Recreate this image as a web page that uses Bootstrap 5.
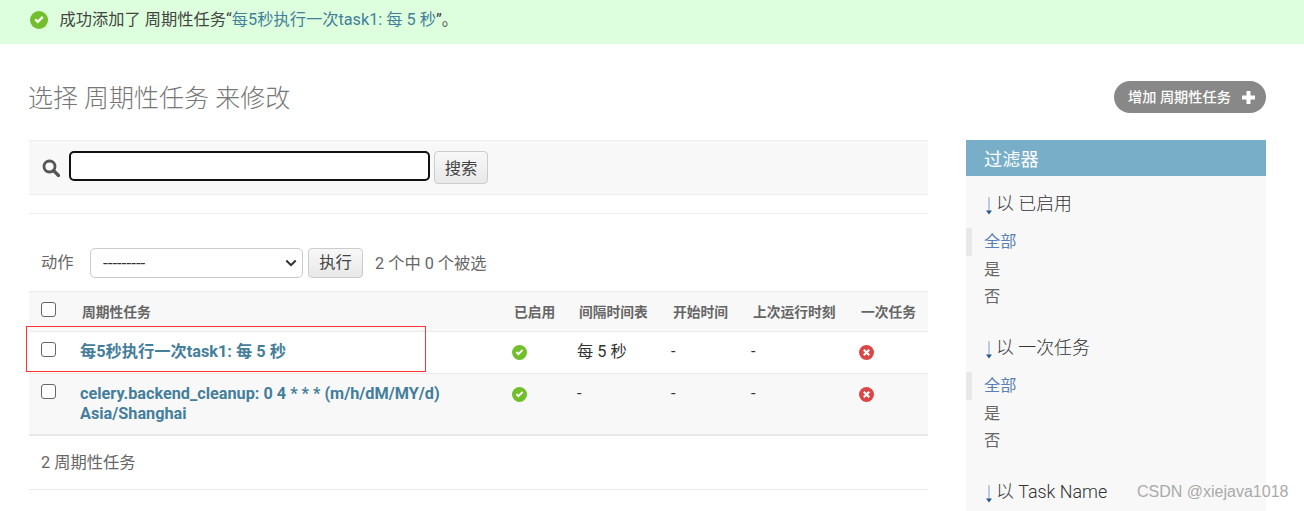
<!DOCTYPE html>
<html lang="zh-CN">
<head>
<meta charset="utf-8">
<title>选择 周期性任务 来修改</title>
<link rel="stylesheet" href="https://cdn.jsdelivr.net/npm/bootstrap@5.3.0/dist/css/bootstrap.min.css">
<style>
html,body{height:100%;overflow:hidden}
body{font-family:Roboto,"Noto Sans CJK SC",sans-serif;font-size:16.25px;line-height:20px;color:#333;background:#fff}
a{text-decoration:none;color:#447e9b}
.shell{position:relative;height:511px;overflow:hidden}
.msg-bar{height:44px;background:#dfd;color:#444;border:0;border-radius:0;margin:0;padding:0 0 4px 30px;gap:11.5px}
.msg-ico{width:18px;height:18px;flex:none}
.page-wrap{padding:37px 38px 0 29px}
.page-head{height:32px;margin-bottom:27px}
.page-title{font-size:25px;font-weight:300;line-height:32px;color:#777;margin:0;padding-top:3px;margin-left:-1px}
.add-btn{width:152px;height:32px;background:#888;color:#fff;font-size:14.2px;font-weight:500;line-height:32px;padding:0 0 0 14px;border:0;gap:11px}
.add-btn:hover{background:#888;color:#fff}
.main-col{width:899px;flex:none}
.side-col{width:300px;flex:none;background:#f8f8f8;height:371px}
.search-bar{height:55px;background:#f8f8f8;border-top:1px solid #eee;border-bottom:1px solid #eee;padding:10px 0 0 13px;gap:4px}
.search-ico{width:18px;height:18px;margin:8px 5px 0 0;flex:none}
.search-input{width:361px;height:30px;border:2px solid #111;border-radius:5px;background:#fff;padding:2px 6px}
.search-input:focus{border-color:#111;box-shadow:none}
.grey-btn{font-size:16.25px;line-height:20px;color:#444;border:1px solid #ccc;border-radius:4px;background:linear-gradient(#f8f8f8,#e8e8e8);padding:0}
.grey-btn:hover{color:#444;border-color:#ccc}
.go-search{width:54px;height:33px;padding-top:2px}
.rule-gap{height:19px;border-bottom:1px solid #eee}
.action-row{height:77px;padding:34px 0 0 12px}
.action-label{color:#666;width:49px;flex:none;margin-top:-1px}
.action-select{width:213px;height:30px;font-size:17px;line-height:20px;color:#333;border:1px solid #ccc;border-radius:5px;padding:0 0 0 12px;background-image:url("data:image/svg+xml,%3csvg xmlns='http://www.w3.org/2000/svg' viewBox='0 0 14 9'%3e%3cpath fill='none' stroke='%23333' stroke-width='2.4' d='M1.5 1.5L7 7l5.500-5.500'/%3e%3c/svg%3e");background-position:right 5px center;background-size:12px 8px;margin-right:5px}
.go-action{width:55px;height:30px;margin-right:12px}
.counter{color:#666}
.task-table{table-layout:fixed;width:899px;margin:0;color:#333;border-top:1px solid #eaeaea}
.table.task-table>*>*>*{box-shadow:none;background:transparent;border-bottom:1px solid #eaeaea;padding:10px 0 10px 10px;vertical-align:top;color:#333;font-size:16.25px;line-height:20px}
.table.task-table>thead>tr>th{background:#f8f8f8;font-size:13.75px;font-weight:600;color:#666;height:40px;padding:10px 0 9px 12px}
.table.task-table>tbody>tr:first-child>td{height:42px}
.table.task-table>tbody>tr:nth-child(2)>td{background:#f8f8f8;border-bottom:2px solid #e8e8e8}
.c-a{width:41px}.c-b{width:432px}.c-c{width:65px}.c-d{width:94px}.c-e{width:80px}.c-f{width:108px}.c-g{width:79px}
.table.task-table>*>*>.cell-check{padding:10px 0 0 12px}
.task-table .form-check-input{width:15px;height:15px;margin:0;border:1px solid #666;border-radius:3px;display:block}
.task-table a{font-weight:700}
.st-ico{width:15px;height:15px;display:block;margin-top:3px}
.paginator{height:54px;border-bottom:1px solid #eaeaea;padding:17px 0 0 12px;color:#666}
.side-title{height:36px;background:#79aec8;color:#fff;font-size:18.2px;line-height:39px;font-weight:400;margin:0;padding-left:18px;overflow:hidden}
.f-group{padding:17px 0 21px;height:144px}
.f-head{font-size:17.9px;font-weight:300;line-height:22px;margin:0 0 13px;padding-left:19px;color:#333;gap:3px}
.f-arrow{width:8px;height:18px;margin-top:4px;flex:none}
.f-list{margin:0;padding:0;list-style:none}
.f-list li{height:27.5px;line-height:27px;padding-left:12px;border-left:6px solid transparent}
.f-list a{color:#666}
.f-list li.is-on{border-left-color:#e8e8e8}
.f-list li.is-on a{color:#5b80b2}
.red-mark{position:absolute;left:26px;top:326px;width:400px;height:46px;border:1px solid #f33;pointer-events:none}
.wm{position:absolute;left:1137px;top:482px;font-family:"Liberation Sans",sans-serif;font-size:16px;line-height:20px;color:#aaa;white-space:nowrap}
</style>
</head>
<body>
<svg width="0" height="0" class="position-absolute">
  <symbol id="i-yes" viewBox="0 0 16 16"><circle cx="8" cy="8" r="8" fill="#70bf2b"/><path d="M3.900 8.200l3 3 5.200-5.300-1.500-1.500-3.700 3.800-1.500-1.500z" fill="#fff"/></symbol>
  <symbol id="i-no" viewBox="0 0 16 16"><circle cx="8" cy="8" r="8" fill="#dd4646"/><path d="M5.900 4.300L8 6.400l2.100-2.100 1.600 1.600L9.600 8l2.100 2.100-1.600 1.600L8 9.600l-2.100 2.100-1.600-1.600L6.400 8 4.300 5.900z" fill="#fff"/></symbol>
  <symbol id="i-down" viewBox="0 0 8 18"><path d="M4 0v15" stroke="#7fa3bf" stroke-width="1" fill="none"/><path d="M1 13.500h6L4 17.500z" fill="#2a5a8a"/></symbol>
</svg>
<div class="shell">
  <div class="alert msg-bar d-flex align-items-center" role="alert">
    <svg class="msg-ico"><use href="#i-yes"/></svg>
    <span>成功添加了 周期性任务“<a href="#">每5秒执行一次task1: 每 5 秒</a>”。</span>
  </div>
  <div class="page-wrap">
    <div class="page-head d-flex justify-content-between align-items-center">
      <h1 class="page-title">选择 周期性任务 来修改</h1>
      <a href="#" class="btn add-btn rounded-pill d-flex align-items-center">增加 周期性任务
        <svg width="13" height="13" viewBox="0 0 13 13"><path d="M4.500 0h4v4.500H13v4H8.500V13h-4V8.500H0v-4h4.500z" fill="#fff"/></svg>
      </a>
    </div>
    <div class="d-flex justify-content-between">
      <div class="main-col">
        <form class="search-bar d-flex align-items-start">
          <svg class="search-ico" viewBox="0 0 18 18"><circle cx="7.500" cy="7.500" r="5.500" fill="none" stroke="#555" stroke-width="2.800"/><path d="M11.500 11.500l5 5" stroke="#555" stroke-width="3.200" stroke-linecap="round"/></svg>
          <input class="form-control search-input" type="text" aria-label="搜索">
          <button type="button" class="btn grey-btn go-search">搜索</button>
        </form>
        <div class="rule-gap"></div>
        <div class="action-row d-flex align-items-start">
          <label class="action-label lh-lg">动作</label>
          <select class="form-select action-select" aria-label="动作"><option>---------</option></select>
          <button type="button" class="btn grey-btn go-action">执行</button>
          <span class="counter lh-lg">2 个中 0 个被选</span>
        </div>
        <table class="table task-table">
          <colgroup><col class="c-a"><col class="c-b"><col class="c-c"><col class="c-d"><col class="c-e"><col class="c-f"><col class="c-g"></colgroup>
          <thead>
            <tr>
              <th class="cell-check"><input class="form-check-input" type="checkbox" aria-label="全选"></th>
              <th>周期性任务</th><th>已启用</th><th>间隔时间表</th><th>开始时间</th><th>上次运行时刻</th><th>一次任务</th>
            </tr>
          </thead>
          <tbody>
            <tr>
              <td class="cell-check"><input class="form-check-input" type="checkbox" aria-label="选择"></td>
              <td><a href="#">每5秒执行一次task1: 每 5 秒</a></td>
              <td><svg class="st-ico"><use href="#i-yes"/></svg></td>
              <td>每 5 秒</td><td>-</td><td>-</td>
              <td><svg class="st-ico"><use href="#i-no"/></svg></td>
            </tr>
            <tr>
              <td class="cell-check"><input class="form-check-input" type="checkbox" aria-label="选择"></td>
              <td><a href="#">celery.backend_cleanup: 0 4 * * * (m/h/dM/MY/d) Asia/Shanghai</a></td>
              <td><svg class="st-ico"><use href="#i-yes"/></svg></td>
              <td>-</td><td>-</td><td>-</td>
              <td><svg class="st-ico"><use href="#i-no"/></svg></td>
            </tr>
          </tbody>
        </table>
        <div class="paginator">2 周期性任务</div>
      </div>
      <aside class="side-col">
        <h2 class="side-title">过滤器</h2>
        <div class="f-group">
          <h3 class="f-head d-flex"><svg class="f-arrow"><use href="#i-down"/></svg>以 已启用</h3>
          <ul class="f-list"><li class="is-on"><a href="#">全部</a></li><li><a href="#">是</a></li><li><a href="#">否</a></li></ul>
        </div>
        <div class="f-group">
          <h3 class="f-head d-flex"><svg class="f-arrow"><use href="#i-down"/></svg>以 一次任务</h3>
          <ul class="f-list"><li class="is-on"><a href="#">全部</a></li><li><a href="#">是</a></li><li><a href="#">否</a></li></ul>
        </div>
        <div class="f-group">
          <h3 class="f-head d-flex"><svg class="f-arrow"><use href="#i-down"/></svg>以 Task Name</h3>
        </div>
      </aside>
    </div>
  </div>
  <div class="red-mark"></div>
  <div class="wm">CSDN @xiejava1018</div>
</div>
<script src="https://cdn.jsdelivr.net/npm/bootstrap@5.3.0/dist/js/bootstrap.bundle.min.js"></script>
</body>
</html>
